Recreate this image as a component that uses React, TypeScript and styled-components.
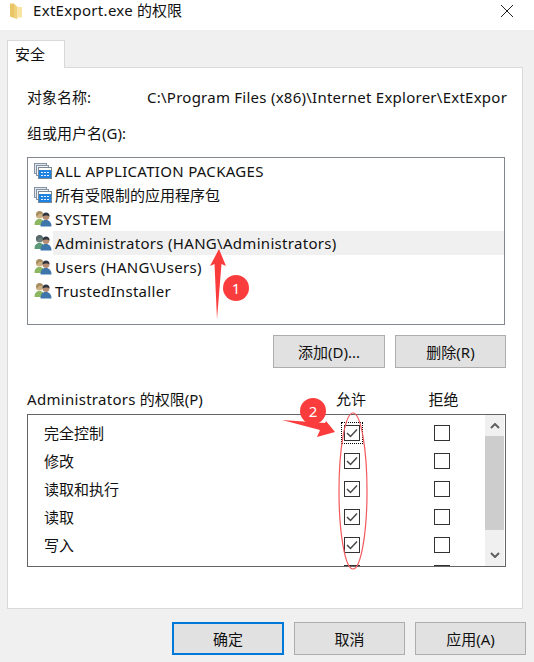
import React from 'react';
import styled, { createGlobalStyle } from 'styled-components';

const principals = [
  { name: 'ALL APPLICATION PACKAGES', kind: 'package', latin: true },
  { name: '所有受限制的应用程序包', kind: 'package' },
  { name: 'SYSTEM', kind: 'users', latin: true },
  { name: 'Administrators (HANG\\Administrators)', kind: 'users', latin: true, selected: true },
  { name: 'Users (HANG\\Users)', kind: 'users', latin: true },
  { name: 'TrustedInstaller', kind: 'users', latin: true },
];

const permissions = ['完全控制', '修改', '读取和执行', '读取', '写入'];

const PackageIcon = () => (
  <svg width="18" height="16" viewBox="0 0 18 16">
    <rect x="0.5" y="0.5" width="12" height="10" fill="#dbe6f1" stroke="#8793a0" />
    <rect x="2.5" y="2.5" width="12" height="10" fill="#eef3f8" stroke="#8793a0" />
    <rect x="4.5" y="4.5" width="13" height="11" fill="#fff" stroke="#7a8794" />
    <rect x="5" y="7" width="12" height="8" fill="#1e83e0" />
    <path d="M7 9h2v1H7zM10 9h2v1h-2zM13 9h2v1h-2zM7 12h2v1H7zM10 12h2v1h-2zM13 12h2v1h-2z" fill="#e6f3ff" />
  </svg>
);

const UsersIcon = ({ dark }: { dark?: boolean }) => (
  <svg width="18" height="18" viewBox="0 0 18 18">
    <path d="M0.500 15c0-3.500 1.500-6 5-6s5.500 2.500 5.500 6z" fill={dark ? '#5c9a78' : '#8cb863'} />
    <circle cx="5.500" cy="5" r="3.600" fill={dark ? '#6d7f7c' : '#cdb184'} />
    <path d="M2 5c0-3 1.500-4 3.500-4S9 2 9 4.500C7 4 4.500 3.500 3.500 6.500z" fill={dark ? '#56686a' : '#a98e63'} />
    <path d="M6.500 16.500c0-4 1.800-6.500 5.300-6.500s5.700 2.500 5.700 6.500z" fill="#3e76ab" />
    <circle cx="12" cy="6.500" r="3.400" fill="#b58d73" />
    <path d="M8.500 6.500C8.500 3.500 10 2.500 12 2.500s3.500 1 3.500 4C14 5.500 11 5 8.500 6.500z" fill="#2f3640" />
  </svg>
);

const FolderIcon = () => (
  <svg width="12" height="17" viewBox="0 0 12 17">
    <path d="M0 0.500h4v14.500l-4-1.500z" fill="#e9c566" />
    <path d="M4 0.500l3.500 3.500v12L4 15z" fill="#f0cf78" />
    <path d="M7.500 4H12v10.500H7.500z" fill="#f9e4a2" />
  </svg>
);

const Check = () => (
  <svg width="12" height="10" viewBox="0 0 12 10">
    <path d="M1 5l3.500 3.500L11 1.500" fill="none" stroke="#484848" strokeWidth="1.500" />
  </svg>
);

const Chevron = ({ down }: { down?: boolean }) => (
  <svg width="10" height="6" viewBox="0 0 10 6">
    <path d={down ? 'M1 1l4 4 4-4' : 'M1 5l4-4 4 4'} fill="none" stroke="#606060" strokeWidth="2" />
  </svg>
);

const App = () => (
  <Window>
    <GlobalStyle />
    <TitleBar>
      <FolderIcon />
      <TitleText>
        <Latin>ExtExport.exe</Latin> 的权限
      </TitleText>
      <CloseIcon viewBox="0 0 14 14">
        <path d="M1 1l12 12M13 1L1 13" stroke="#222" strokeWidth="1" fill="none" />
      </CloseIcon>
    </TitleBar>
    <Body>
      <Tab>安全</Tab>
      <Panel>
        <ObjectRow>
          <ObjectLabel>对象名称:</ObjectLabel>
          <ObjectValue>C:\Program Files (x86)\Internet Explorer\ExtExpor</ObjectValue>
        </ObjectRow>
        <GroupLabel>组或用户名(G):</GroupLabel>
        <PrincipalList>
          {principals.map((item) => (
            <PrincipalRow key={item.name}>
              <IconSlot>
                {item.kind === 'package' ? <PackageIcon /> : <UsersIcon dark={item.selected} />}
              </IconSlot>
              <PrincipalName $selected={item.selected}>
                {item.latin ? <Latin>{item.name}</Latin> : item.name}
              </PrincipalName>
            </PrincipalRow>
          ))}
        </PrincipalList>
        <ListActions>
          <Button $width={112}>添加(D)...</Button>
          <Button $width={111}>删除(R)</Button>
        </ListActions>
        <PermissionHeader>
          <PermissionTitle>
            <Latin>Administrators</Latin> 的权限(P)
          </PermissionTitle>
          <ColumnTitle>允许</ColumnTitle>
          <ColumnTitle>拒绝</ColumnTitle>
        </PermissionHeader>
        <PermissionBox>
          <PermissionRows>
            {permissions.map((name, index) => (
              <PermissionRow key={name}>
                <PermissionName>{name}</PermissionName>
                <CheckCell>
                  <CheckBox $focused={index === 0}>
                    <Check />
                  </CheckBox>
                </CheckCell>
                <CheckCell>
                  <CheckBox />
                </CheckCell>
              </PermissionRow>
            ))}
            <PermissionRow>
              <PermissionName />
              <CheckCell>
                <CheckBox />
              </CheckCell>
              <CheckCell>
                <CheckBox />
              </CheckCell>
            </PermissionRow>
          </PermissionRows>
          <ScrollBar>
            <ScrollUp>
              <Chevron />
            </ScrollUp>
            <ScrollThumb />
            <ScrollDown>
              <Chevron down />
            </ScrollDown>
          </ScrollBar>
        </PermissionBox>
      </Panel>
      <Footer>
        <FooterButton $primary>确定</FooterButton>
        <FooterButton>取消</FooterButton>
        <FooterButton>应用(A)</FooterButton>
      </Footer>
    </Body>
    <Marks viewBox="0 0 534 662">
      <path d="M219 249L226 266L221.500 264L217 319L214.500 264L210 266Z" fill="#fb3c3c" />
      <path d="M335 432L317 437L320 430L282 420L325 423L326 421Z" fill="#fb3c3c" />
      <ellipse cx="353" cy="491" rx="14" ry="78" fill="none" stroke="#f4585c" strokeWidth="1.200" />
    </Marks>
    <Badge $x={223} $y={275}>1</Badge>
    <Badge $x={300} $y={398}>2</Badge>
  </Window>
);

export default App;

const GlobalStyle = createGlobalStyle`
  html, body {
    margin: 0;
    padding: 0;
    background: #f0f0f0;
  }
  * {
    box-sizing: border-box;
  }
`;

const Window = styled.div`
  position: relative;
  width: 534px;
  height: 662px;
  overflow: hidden;
  display: flex;
  flex-direction: column;
  font-family: "Noto Sans", "Noto Sans CJK SC", sans-serif;
  font-size: 15px;
  color: #111;
`;

const Latin = styled.span`
  letter-spacing: 0.3px;
`;

const TitleBar = styled.div`
  height: 30px;
  flex: none;
  background: #fff;
  display: flex;
  align-items: center;
  padding: 0 20px 8px 10px;
`;

const TitleText = styled.div`
  margin: -3px 0 0 11px;
  flex: 1;
`;

const CloseIcon = styled.svg`
  width: 14px;
  height: 14px;
`;

const Body = styled.div`
  flex: 1;
  background: #f0f0f0;
  padding: 10px 8px 0 7px;
  display: flex;
  flex-direction: column;
  align-items: flex-start;
`;

const Tab = styled.div`
  width: 58px;
  height: 28px;
  background: #fff;
  border: 1px solid #d9d9d9;
  border-bottom: none;
  display: flex;
  align-items: center;
  padding: 0 0 3px 7px;
  position: relative;
  z-index: 1;
  margin-bottom: -1px;
`;

const Panel = styled.div`
  width: 516px;
  height: 542px;
  background: #fff;
  border: 1px solid #d9d9d9;
  padding: 0 17px 0 19px;
  display: flex;
  flex-direction: column;
`;

const ObjectRow = styled.div`
  display: flex;
  height: 20px;
  margin-top: 19px;
  line-height: 20px;
  white-space: nowrap;
`;

const ObjectLabel = styled.div`
  width: 120px;
  flex: none;
`;

const ObjectValue = styled.div`
  flex: 1;
  letter-spacing: 0.25px;
`;

const GroupLabel = styled.div`
  margin-top: 16px;
  height: 20px;
  line-height: 20px;
`;

const PrincipalList = styled.div`
  margin-top: 14px;
  height: 168px;
  border: 1px solid #828790;
  padding-top: 1px;
  flex: none;
`;

const PrincipalRow = styled.div`
  height: 24px;
  display: flex;
  align-items: center;
  padding-left: 6px;
`;

const IconSlot = styled.div`
  width: 19px;
  height: 18px;
  flex: none;
  display: flex;
  align-items: center;
`;

const PrincipalName = styled.div<{ $selected?: boolean }>`
  flex: 1;
  height: 24px;
  line-height: 24px;
  padding-left: 2px;
  white-space: nowrap;
  background: ${(p) => (p.$selected ? '#f0f0f0' : 'transparent')};
`;

const ListActions = styled.div`
  margin-top: 10px;
  display: flex;
  justify-content: flex-end;
  gap: 10px;
  margin-right: -1px;
`;

const Button = styled.div<{ $width: number }>`
  width: ${(p) => p.$width}px;
  height: 33px;
  background: #e1e1e1;
  border: 1px solid #adadad;
  display: flex;
  align-items: center;
  justify-content: center;
`;

const PermissionHeader = styled.div`
  margin-top: 21px;
  height: 20px;
  line-height: 20px;
  display: grid;
  grid-template-columns: 300px 48px 92px;
  justify-items: start;
`;

const PermissionTitle = styled.div`
  white-space: nowrap;
`;

const ColumnTitle = styled.div`
  justify-self: center;
  &:last-child {
    margin-left: 45px;
  }
`;

const PermissionBox = styled.div`
  margin-top: 5px;
  margin-right: -1px;
  height: 153px;
  border: 1px solid #646464;
  display: flex;
  overflow: hidden;
`;

const PermissionRows = styled.div`
  flex: 1;
  padding-top: 4px;
`;

const PermissionRow = styled.div`
  height: 28px;
  display: grid;
  grid-template-columns: 296px 24px 66px 24px;
  align-items: center;
  padding-left: 16px;
`;

const PermissionName = styled.div`
  line-height: 28px;
`;

const CheckCell = styled.div`
  display: flex;
  justify-content: center;
  &:last-child {
    grid-column: 4;
  }
`;

const CheckBox = styled.div<{ $focused?: boolean }>`
  width: 16px;
  height: 16px;
  border: 1px solid #333;
  background: #fff;
  display: flex;
  align-items: center;
  justify-content: center;
  outline: ${(p) => (p.$focused ? '1px dotted #000' : 'none')};
  outline-offset: 2px;
`;

const ScrollBar = styled.div`
  width: 19px;
  margin-right: 1px;
  flex: none;
  background: #f0f0f0;
  display: flex;
  flex-direction: column;
`;

const ScrollUp = styled.div`
  height: 21px;
  flex: none;
  display: flex;
  align-items: center;
  justify-content: center;
`;

const ScrollThumb = styled.div`
  height: 94px;
  flex: none;
  background: #cdcdcd;
`;

const ScrollDown = styled.div`
  flex: 1;
  display: flex;
  align-items: flex-end;
  justify-content: center;
  padding-bottom: 8px;
`;

const Footer = styled.div`
  width: 519px;
  margin-top: 13px;
  display: flex;
  justify-content: flex-end;
  gap: 10px;
`;

const FooterButton = styled.div<{ $primary?: boolean }>`
  width: ${(p) => (p.$primary ? 112 : 111)}px;
  height: 33px;
  padding-bottom: 1px;
  background: #e1e1e1;
  border: ${(p) => (p.$primary ? '2px solid #0078d7' : '1px solid #adadad')};
  display: flex;
  align-items: center;
  justify-content: center;
`;

const Marks = styled.svg`
  position: absolute;
  left: 0;
  top: 0;
  width: 534px;
  height: 662px;
  pointer-events: none;
`;

const Badge = styled.div<{ $x: number; $y: number }>`
  position: absolute;
  left: ${(p) => p.$x}px;
  top: ${(p) => p.$y}px;
  width: 26px;
  height: 26px;
  border-radius: 50%;
  background: #fb3c3c;
  color: #fff;
  font-size: 15px;
  display: flex;
  align-items: center;
  justify-content: center;
`;
